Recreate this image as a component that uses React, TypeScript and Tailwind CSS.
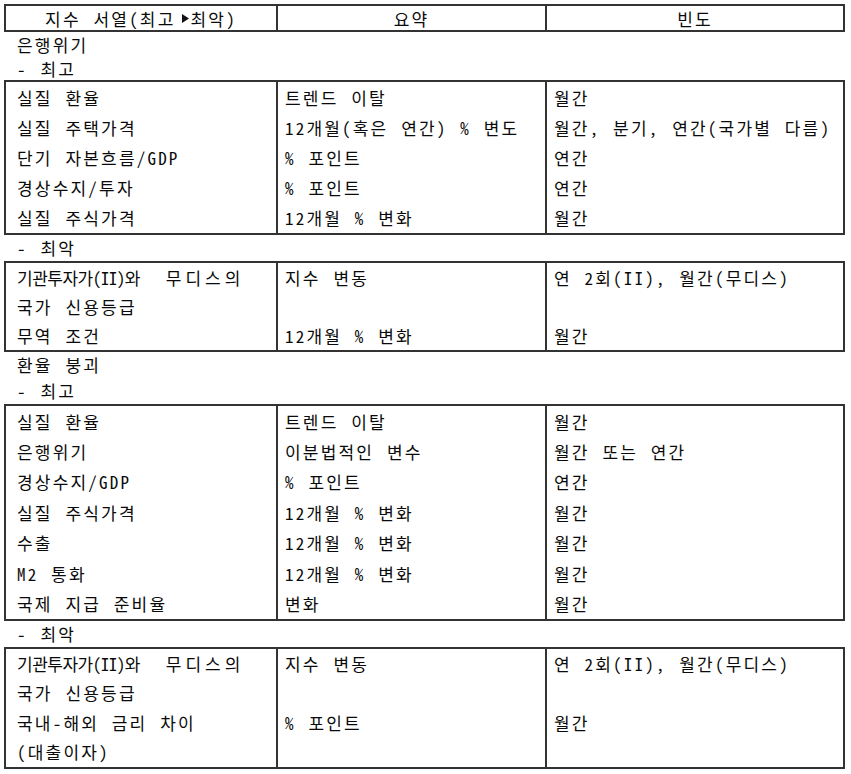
import React from "react";

type Row = [React.ReactNode, string, string];

const Tri = () => (
  <svg width="7" height="9" viewBox="0 0 7 9" className="inline-block ml-[6px] mr-[2px] align-[1px]">
    <polygon points="0,0 7,4.5 0,9" fill="#111" />
  </svg>
);

const Inst = () => (
  <span className="whitespace-nowrap">
    <span className="tracking-[-0.5px]">기관투자가(II)와</span>
    <span className="inline-block w-[26px]" />
    <span className="tracking-[4px]">무디스의</span>
  </span>
);

const t1: Row[] = [
  ["실질 환율", "트렌드 이탈", "월간"],
  ["실질 주택가격", "12개월(혹은 연간) % 변도", "월간, 분기, 연간(국가별 다름)"],
  ["단기 자본흐름/GDP", "% 포인트", "연간"],
  ["경상수지/투자", "% 포인트", "연간"],
  ["실질 주식가격", "12개월 % 변화", "월간"],
];

const t2: Row[] = [
  [<Inst key="i" />, "지수 변동", "연 2회(II), 월간(무디스)"],
  ["국가 신용등급", "", ""],
  ["무역 조건", "12개월 % 변화", "월간"],
];

const t3: Row[] = [
  ["실질 환율", "트렌드 이탈", "월간"],
  ["은행위기", "이분법적인 변수", "월간 또는 연간"],
  ["경상수지/GDP", "% 포인트", "연간"],
  ["실질 주식가격", "12개월 % 변화", "월간"],
  ["수출", "12개월 % 변화", "월간"],
  ["M2 통화", "12개월 % 변화", "월간"],
  ["국제 지급 준비율", "변화", "월간"],
];

const t4: Row[] = [
  [<Inst key="i" />, "지수 변동", "연 2회(II), 월간(무디스)"],
  ["국가 신용등급", "", ""],
  ["국내-해외 금리 차이", "% 포인트", "월간"],
  ["(대출이자)", "", ""],
];

function Table({ rows, rowH }: { rows: Row[]; rowH: string }) {
  return (
    <div className="w-[841px] border-2 border-[#333] grid grid-cols-[270px_269px_298px]">
      {rows.map((r, i) => (
        <React.Fragment key={i}>
          <div className={`${rowH} flex items-center pl-[11px] whitespace-nowrap`}>{r[0]}</div>
          <div className={`${rowH} flex items-center pl-[7px] border-l-2 border-[#333] whitespace-nowrap`}>{r[1]}</div>
          <div className={`${rowH} flex items-center pl-[7px] border-l-2 border-[#333] whitespace-nowrap`}>{r[2]}</div>
        </React.Fragment>
      ))}
    </div>
  );
}

function Label({ children, h }: { children: React.ReactNode; h: string }) {
  return <div className={`${h} flex items-center pl-[13px] whitespace-pre`}>{children}</div>;
}

export default function App() {
  return (
    <div className="w-[851px] h-[774px] bg-white pt-[4px] pl-[4px] text-[17px] leading-none text-[#0a0a0a] tracking-[2.2px] [word-spacing:2px] [font-feature-settings:'hwid'] font-['Noto_Sans_CJK_KR','Noto_Sans',sans-serif]">
      <div className="w-[841px] h-[28px] border-2 border-[#333] grid grid-cols-[270px_269px_298px]">
        <div className="flex items-center justify-center whitespace-nowrap">
          지수 서열(최고<Tri />최악)
        </div>
        <div className="flex items-center justify-center border-l-2 border-[#333]">요약</div>
        <div className="flex items-center justify-center border-l-2 border-[#333]">빈도</div>
      </div>
      <Label h="h-[24px]">은행위기</Label>
      <Label h="h-[24px]">- 최고</Label>
      <Table rows={t1} rowH="h-[30.2px]" />
      <Label h="h-[26px]">- 최악</Label>
      <Table rows={t2} rowH="h-[29px]" />
      <Label h="h-[26px]">환율 붕괴</Label>
      <Label h="h-[26px]">- 최고</Label>
      <Table rows={t3} rowH="h-[30.4px]" />
      <Label h="h-[26px]">- 최악</Label>
      <Table rows={t4} rowH="h-[29.5px]" />
    </div>
  );
}
